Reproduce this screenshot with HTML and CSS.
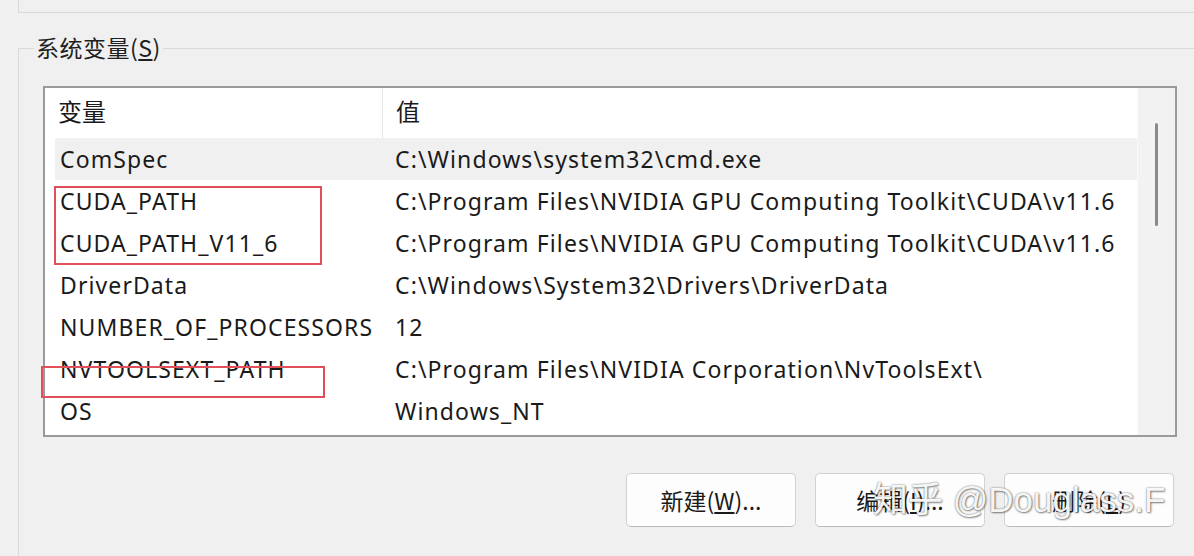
FILE: index.html
```html
<!DOCTYPE html>
<html lang="zh-CN">
<head>
<meta charset="utf-8">
<title>系统变量</title>
<link rel="stylesheet" href="styles.css">
</head>
<body>
<div class="page">
  <div class="top-box"></div>
  <div class="group">
    <div class="group-label">系统变量(<u>S</u>)</div>
    <div class="list">
      <div class="list-main">
        <div class="row header">
          <div class="c1">变量</div>
          <div class="c2 sep">值</div>
        </div>
        <div class="row selected">
          <div class="c1">ComSpec</div>
          <div class="c2">C:\Windows\system32\cmd.exe</div>
        </div>
        <div class="row">
          <div class="c1">CUDA_PATH</div>
          <div class="c2">C:\Program Files\NVIDIA GPU Computing Toolkit\CUDA\v11.6</div>
        </div>
        <div class="row">
          <div class="c1">CUDA_PATH_V11_6</div>
          <div class="c2">C:\Program Files\NVIDIA GPU Computing Toolkit\CUDA\v11.6</div>
        </div>
        <div class="row">
          <div class="c1">DriverData</div>
          <div class="c2">C:\Windows\System32\Drivers\DriverData</div>
        </div>
        <div class="row">
          <div class="c1">NUMBER_OF_PROCESSORS</div>
          <div class="c2">12</div>
        </div>
        <div class="row">
          <div class="c1">NVTOOLSEXT_PATH</div>
          <div class="c2">C:\Program Files\NVIDIA Corporation\NvToolsExt\</div>
        </div>
        <div class="row">
          <div class="c1">OS</div>
          <div class="c2">Windows_NT</div>
        </div>
      </div>
      <div class="scrollbar"><div class="thumb"></div></div>
    </div>
    <div class="buttons">
      <button class="btn">新建(<u>W</u>)...</button>
      <button class="btn">编辑(<u>I</u>)...</button>
      <button class="btn">删除(<u>L</u>)</button>
    </div>
  </div>
  <div class="mark mark-1"></div>
  <div class="mark mark-2"></div>
  <div class="watermark">知乎 @Douglass.F</div>
</div>
</body>
</html>
```
FILE: styles.css
```css
html, body {
  margin: 0;
  padding: 0;
}
body {
  background: #f0f0f0;
  width: 1194px;
  height: 556px;
  overflow: hidden;
  font-family: "Noto Sans", "Open Sans", "Noto Sans CJK SC", sans-serif;
  color: #1a1a1a;
}
.page {
  position: relative;
  width: 1194px;
  height: 556px;
}
.top-box {
  margin-left: 18px;
  height: 12px;
  border-left: 1px solid #dadada;
  border-bottom: 1px solid #dadada;
}
.group {
  position: relative;
  margin-top: 35px;
  margin-left: 18px;
  border-top: 1px solid #dadada;
  border-left: 1px solid #dadada;
  padding: 37px 17px 40px 24px;
}
.group-label {
  position: absolute;
  top: -15px;
  left: 15px;
  padding: 0 2px;
  background: #f0f0f0;
  font-size: 23px;
  line-height: 26px;
  letter-spacing: 0.5px;
  font-family: "Noto Sans CJK SC", sans-serif;
  color: #202020;
}
.group-label u, .btn u {
  text-underline-offset: 2px;
}
.list {
  display: flex;
  height: 347px;
  border: 2px solid #9a9a9a;
  background: #ffffff;
}
.list-main {
  flex: 1;
  padding-left: 10px;
}
.row {
  display: grid;
  grid-template-columns: 327px 1fr;
  height: 42px;
  align-items: center;
  font-size: 23px;
  letter-spacing: 1.1px;
  white-space: nowrap;
}
.row .c1 {
  padding-left: 5px;
}
.row .c2 {
  padding-left: 13px;
}
.header {
  height: 50px;
  align-items: stretch;
  font-family: "Noto Sans CJK SC", sans-serif;
  font-size: 24px;
  letter-spacing: 0;
}
.header .c1 {
  padding-left: 3px;
  padding-bottom: 5px;
  display: flex;
  align-items: center;
}
.header .c2 {
  padding-bottom: 5px;
  display: flex;
  align-items: center;
}
.sep {
  border-left: 1px solid #e6e6e6;
}
.selected {
  background: #f0f0f0;
}
.scrollbar {
  width: 37px;
  background: #f2f2f2;
  border-left: 1px solid #fafafa;
}
.thumb {
  margin-left: 17px;
  margin-top: 35px;
  width: 3px;
  height: 103px;
  border-radius: 2px;
  background: #8a8a8a;
}
.buttons {
  display: flex;
  justify-content: flex-end;
  gap: 19px;
  margin-top: 36px;
  margin-right: 3px;
}
.btn {
  width: 170px;
  height: 54px;
  background: #fdfdfd;
  border: 1px solid #d2d2d2;
  border-bottom-color: #bcbcbc;
  border-radius: 5px;
  font-family: "Noto Sans CJK SC", sans-serif;
  font-size: 23px;
  color: #1a1a1a;
  padding: 0;
}
.mark {
  position: absolute;
  border: 2px solid #e0505a;
}
.mark-1 {
  left: 54px;
  top: 186px;
  width: 264px;
  height: 75px;
}
.mark-2 {
  left: 41px;
  top: 366px;
  width: 280px;
  height: 28px;
}
.watermark {
  position: absolute;
  left: 873px;
  top: 478px;
  font-family: "Liberation Sans", "Noto Sans CJK SC", sans-serif;
  font-size: 35px;
  line-height: 44px;
  color: rgba(255, 255, 255, 0.95);
  text-shadow: 0 0 2px rgba(0, 0, 0, 0.55), 1px 1px 2px rgba(0, 0, 0, 0.4);
  white-space: nowrap;
}
```
